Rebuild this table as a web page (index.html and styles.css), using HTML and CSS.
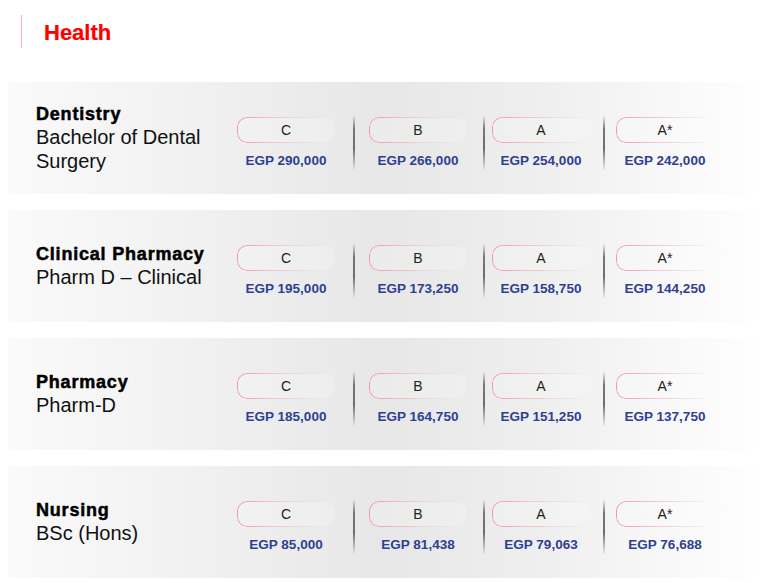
FILE: index.html
```html
<!DOCTYPE html>
<html lang="en">
<head>
<meta charset="utf-8">
<title>Health – Fees</title>
<link rel="stylesheet" href="styles.css">
</head>
<body>
<header class="section-head">
  <h1 class="section-title">Health</h1>
</header>
<main class="programs">
  <section class="program">
    <div class="program-name">
      <h2 class="program-title">Dentistry</h2>
      <p class="program-degree">Bachelor of Dental Surgery</p>
    </div>
    <div class="grades">
      <div class="grade"><span class="pill">C</span><span class="fee">EGP 290,000</span></div>
      <span class="sep sep-1"></span>
      <div class="grade"><span class="pill">B</span><span class="fee">EGP 266,000</span></div>
      <span class="sep sep-2"></span>
      <div class="grade"><span class="pill">A</span><span class="fee">EGP 254,000</span></div>
      <span class="sep sep-3"></span>
      <div class="grade"><span class="pill">A*</span><span class="fee">EGP 242,000</span></div>
    </div>
  </section>
  <section class="program">
    <div class="program-name">
      <h2 class="program-title">Clinical Pharmacy</h2>
      <p class="program-degree">Pharm D – Clinical</p>
    </div>
    <div class="grades">
      <div class="grade"><span class="pill">C</span><span class="fee">EGP 195,000</span></div>
      <span class="sep sep-1"></span>
      <div class="grade"><span class="pill">B</span><span class="fee">EGP 173,250</span></div>
      <span class="sep sep-2"></span>
      <div class="grade"><span class="pill">A</span><span class="fee">EGP 158,750</span></div>
      <span class="sep sep-3"></span>
      <div class="grade"><span class="pill">A*</span><span class="fee">EGP 144,250</span></div>
    </div>
  </section>
  <section class="program">
    <div class="program-name">
      <h2 class="program-title">Pharmacy</h2>
      <p class="program-degree">Pharm-D</p>
    </div>
    <div class="grades">
      <div class="grade"><span class="pill">C</span><span class="fee">EGP 185,000</span></div>
      <span class="sep sep-1"></span>
      <div class="grade"><span class="pill">B</span><span class="fee">EGP 164,750</span></div>
      <span class="sep sep-2"></span>
      <div class="grade"><span class="pill">A</span><span class="fee">EGP 151,250</span></div>
      <span class="sep sep-3"></span>
      <div class="grade"><span class="pill">A*</span><span class="fee">EGP 137,750</span></div>
    </div>
  </section>
  <section class="program">
    <div class="program-name">
      <h2 class="program-title">Nursing</h2>
      <p class="program-degree">BSc (Hons)</p>
    </div>
    <div class="grades">
      <div class="grade"><span class="pill">C</span><span class="fee">EGP 85,000</span></div>
      <span class="sep sep-1"></span>
      <div class="grade"><span class="pill">B</span><span class="fee">EGP 81,438</span></div>
      <span class="sep sep-2"></span>
      <div class="grade"><span class="pill">A</span><span class="fee">EGP 79,063</span></div>
      <span class="sep sep-3"></span>
      <div class="grade"><span class="pill">A*</span><span class="fee">EGP 76,688</span></div>
    </div>
  </section>
</main>
</body>
</html>
```

FILE: styles.css
```css
* { box-sizing: border-box; }

html, body {
  margin: 0;
  padding: 0;
  background: #ffffff;
  font-family: "Liberation Sans", Arial, sans-serif;
  color: #111;
}

.section-head {
  margin: 15px 0 0 21px;
  height: 33px;
  border-left: 1px solid #f5b3b3;
  padding-left: 22px;
  display: flex;
  align-items: center;
}

.section-title {
  margin: 2px 0 0;
  font-size: 22px;
  font-weight: 700;
  color: #ff0000;
  line-height: 1;
  -webkit-text-stroke: 0.2px #ff0000;
}

.programs {
  margin: 34px 0 0 8px;
  width: 748px;
  display: flex;
  flex-direction: column;
  gap: 16px;
}

.program {
  height: 112px;
  display: flex;
  align-items: center;
  padding-left: 28px;
  background: linear-gradient(90deg, #fafafa 0%, #f2f2f2 22%, #e7e7e7 50%, #eeeeee 70%, #f8f8f8 88%, #fefefe 100%);
}

.program-name {
  width: 201px;
  flex-shrink: 0;
}

.program-title {
  margin: 0;
  font-size: 18px;
  line-height: 23.5px;
  font-weight: 700;
  letter-spacing: 0.8px;
  color: #000;
  -webkit-text-stroke: 0.5px #000;
}

.program-degree {
  margin: 0;
  font-size: 20px;
  line-height: 23.5px;
  color: #111;
}

.grades {
  display: flex;
  align-items: center;
  margin-top: 10px;
}

.grade {
  width: 98px;
  display: flex;
  flex-direction: column;
  align-items: center;
  gap: 10px;
}

.pill {
  position: relative;
  width: 98px;
  height: 26px;
  border-radius: 10px;
  display: flex;
  align-items: center;
  justify-content: center;
  font-size: 14px;
  color: #222;
  background: rgba(255, 255, 255, 0.2);
}

.pill::before {
  content: "";
  position: absolute;
  inset: 0;
  border-radius: inherit;
  padding: 1px;
  background: linear-gradient(90deg, #ee9aa6 0%, #f2c2c8 35%, rgba(235, 215, 218, 0.7) 70%, rgba(255, 255, 255, 0) 100%);
  -webkit-mask: linear-gradient(#000 0 0) content-box, linear-gradient(#000 0 0);
  -webkit-mask-composite: xor;
  mask-composite: exclude;
}

.fee {
  font-size: 13.5px;
  line-height: 16px;
  font-weight: 700;
  color: #2f3f92;
  white-space: nowrap;
}

.sep {
  width: 2px;
  height: 56px;
  background: linear-gradient(180deg, rgba(110, 110, 110, 0) 0%, #777 25%, #6e6e6e 60%, rgba(110, 110, 110, 0) 100%);
}

.sep-1 { margin: 0 14px 0 18px; }
.sep-2 { margin: 0 7px 0 16px; }
.sep-3 { margin: 0 11px 0 13px; }
```
